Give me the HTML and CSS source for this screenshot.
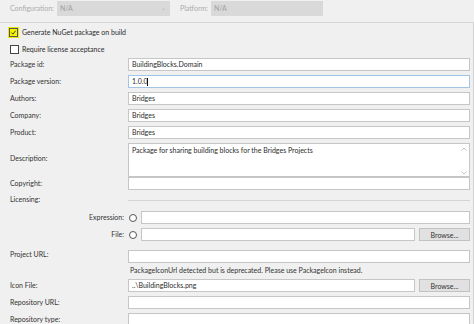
FILE: index.html
```html
<!DOCTYPE html>
<html lang="en">
<head>
    <meta charset="UTF-8">
    <title>Package properties</title>
    <link rel="stylesheet" href="styles.css">
</head>
<body>
    <div class="toolbar">
        <span class="tb-label">Configuration:</span>
        <div class="combo combo-config">N/A<span class="combo-arrow">&#8964;</span></div>
        <span class="tb-label tb-platform">Platform:</span>
        <div class="combo combo-platform">N/A</div>
    </div>

    <div class="panel">
        <div class="check-row">
            <span class="check checked">
                <svg width="9" height="9" viewBox="0 0 9 9"><path d="M1.8 4.6 L3.7 6.6 L7.3 2.2" fill="none" stroke="#222" stroke-width="1.1"/></svg>
            </span>
            <span>Generate NuGet package on build</span>
        </div>
        <div class="check-row second">
            <span class="check"></span>
            <span>Require license acceptance</span>
        </div>

        <div class="form">
            <label class="lbl">Package id:</label>
            <div class="field">BuildingBlocks.Domain</div>

            <label class="lbl">Package version:</label>
            <div class="field focused">1.0.0<span class="caret"></span></div>

            <label class="lbl">Authors:</label>
            <div class="field">Bridges</div>

            <label class="lbl">Company:</label>
            <div class="field">Bridges</div>

            <label class="lbl">Product:</label>
            <div class="field">Bridges</div>

            <label class="lbl row-desc">Description:</label>
            <div class="field area">
                <span>Package for sharing building blocks for the Bridges Projects</span>
                <span class="scroll">
                    <svg width="6" height="4" viewBox="0 0 6 4"><path d="M0.5 3.5 L3 1 L5.5 3.5" fill="none" stroke="#c0c0c0" stroke-width="1"/></svg>
                    <svg width="6" height="4" viewBox="0 0 6 4"><path d="M0.5 0.5 L3 3 L5.5 0.5" fill="none" stroke="#c0c0c0" stroke-width="1"/></svg>
                </span>
            </div>

            <label class="lbl">Copyright:</label>
            <div class="field"></div>

            <label class="lbl row-lic">Licensing:</label>
            <div class="row-lic rule"></div>

            <label class="lbl sub">Expression:</label>
            <div class="opt">
                <span class="radio"></span>
                <div class="field grow"></div>
            </div>

            <label class="lbl sub">File:</label>
            <div class="opt">
                <span class="radio"></span>
                <div class="field grow"></div>
                <button class="btn">Browse...</button>
            </div>

            <label class="lbl row-url">Project URL:</label>
            <div class="field row-url"></div>

            <div></div>
            <div class="note">PackageIconUrl detected but is deprecated. Please use PackageIcon instead.</div>

            <label class="lbl">Icon File:</label>
            <div class="opt">
                <div class="field grow">..\BuildingBlocks.png</div>
                <button class="btn">Browse...</button>
            </div>

            <label class="lbl">Repository URL:</label>
            <div class="field"></div>

            <label class="lbl">Repository type:</label>
            <div class="field"></div>
        </div>
    </div>
</body>
</html>
```

FILE: styles.css
```css
* {
    margin: 0;
    padding: 0;
    box-sizing: border-box;
}

body {
    background-color: #f0f0f0;
    color: #2b2b2b;
    font-family: Lato, 'Noto Sans', sans-serif;
    font-size: 7px;
    line-height: 1;
    width: 474px;
    height: 324px;
    overflow: hidden;
}

.toolbar {
    display: flex;
    align-items: center;
    height: 23px;
    padding: 0 0 6px 10px;
    border-bottom: 1px solid #d6d6d6;
}

.tb-label {
    color: #ababab;
    width: 47px;
}

.tb-platform {
    width: 31px;
    margin-left: 10px;
}

.combo {
    display: flex;
    align-items: center;
    justify-content: space-between;
    height: 15px;
    padding: 0 4px 0 3px;
    background-color: #d9d9d9;
    color: #a2a2a2;
}

.combo-config {
    width: 113px;
}

.combo-platform {
    width: 112px;
}

.combo-arrow {
    font-size: 6px;
    color: #b0b0b0;
}

.panel {
    height: 301px;
    padding-top: 4px;
    border-right: 1px solid #d2d2d2;
    width: 474px;
}

.check-row {
    display: flex;
    align-items: center;
    gap: 3px;
    height: 11px;
    padding-left: 8px;
}

.check-row.second {
    margin-top: 6px;
    padding-left: 10px;
}

.check {
    width: 9px;
    height: 9px;
    border: 1px solid #444;
    background-color: #fff;
}

.check.checked {
    width: 11px;
    height: 11px;
    border: 1px solid #e8e800;
    background-color: #f4f400;
    display: flex;
    align-items: center;
    justify-content: center;
}

.check.checked svg {
    border: 1px solid #555;
    width: 9px;
    height: 9px;
}

.form {
    display: grid;
    grid-template-columns: 128px 1fr;
    grid-auto-rows: 13px;
    row-gap: 4px;
    margin-top: 3px;
    padding-right: 3px;
}

.lbl {
    display: flex;
    align-items: center;
    padding-left: 10px;
    color: #333;
}

.lbl.sub {
    justify-content: flex-end;
    padding-right: 4px;
}

.field {
    display: flex;
    align-items: center;
    height: 13px;
    padding-left: 3px;
    background-color: #fff;
    border: 1px solid #c6c6c6;
}

.field.focused {
    border-color: #a3c6e6;
}

.caret {
    width: 1px;
    height: 8px;
    background-color: #111;
}

.field.area {
    grid-row: span 2;
    height: 34px;
    align-items: flex-start;
    justify-content: space-between;
    padding-top: 3px;
}

.row-desc {
    grid-row: span 2;
}

.scroll {
    display: flex;
    flex-direction: column;
    justify-content: space-between;
    height: 28px;
    width: 8px;
}

.row-lic {
    height: 10px;
}

.rule {
    border-top: 1px solid #d4d4d4;
    margin-top: 6px;
    height: 1px;
}

.opt {
    display: flex;
    align-items: center;
    gap: 4px;
}

.radio {
    width: 8px;
    height: 8px;
    margin-left: 1px;
    border: 1px solid #555;
    border-radius: 50%;
    background-color: #fff;
}

.grow {
    flex: 1;
}

.btn {
    width: 51px;
    height: 13px;
    font-family: inherit;
    font-size: 7px;
    color: #333;
    background-color: #e1e1e1;
    border: 1px solid #c2c2c2;
}

.row-url {
    margin-top: 5px;
}

.note {
    display: flex;
    align-items: center;
    padding-left: 2px;
    margin-top: 3px;
    color: #333;
}
```
